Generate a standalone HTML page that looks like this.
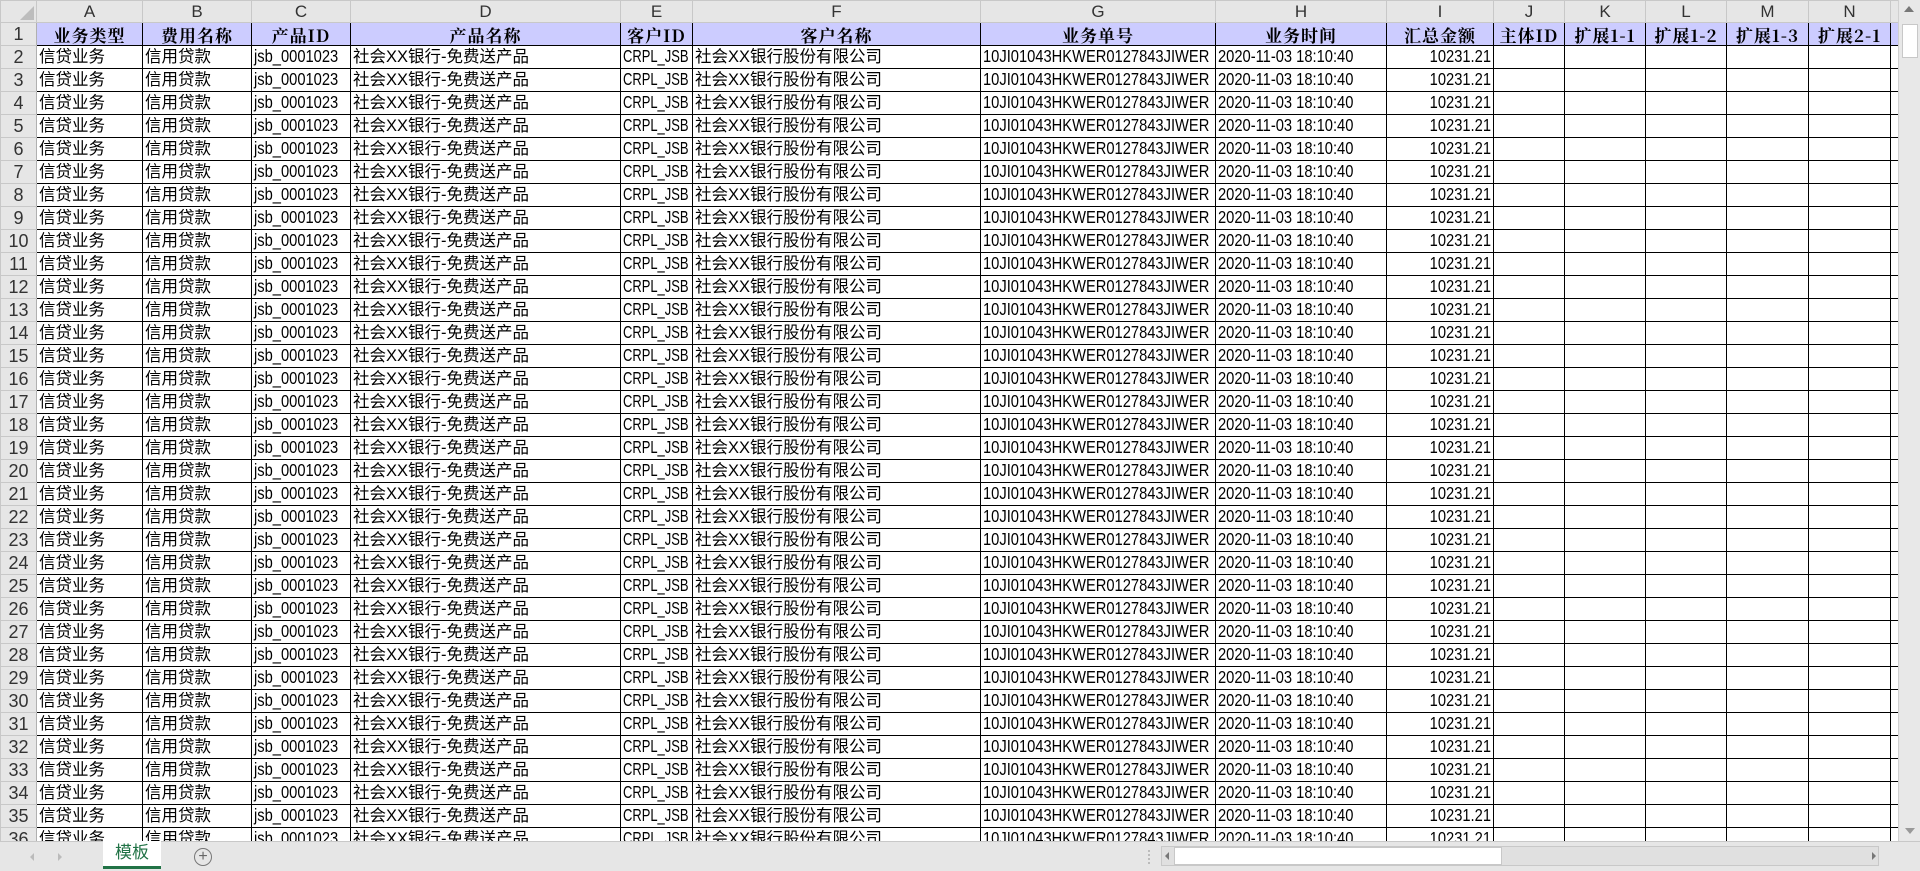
<!DOCTYPE html>
<html><head><meta charset="utf-8"><style>
*{margin:0;padding:0;box-sizing:border-box}
body{width:1920px;height:871px;overflow:hidden;background:#fff;position:relative;font-family:"Liberation Sans","Noto Sans CJK SC",sans-serif}
#wrap{position:absolute;left:0;top:0;width:1898px;height:841px;overflow:hidden}
table{border-collapse:collapse;table-layout:fixed;width:1898px}
td{height:23px;border:1px solid #000;white-space:nowrap;overflow:hidden;font-size:16.5px;padding:0 2px;color:#000;line-height:21px}
td span.n{display:inline-block;font-size:17.5px;transform:scaleX(.84);transform-origin:left center}
td span.e{transform:scaleX(.74)}
td.r span.n{transform-origin:right center}
td.v{overflow:visible}
tr.ch td{height:21px;background:#e6e6e6;border:1px solid #c8c8c8;text-align:center;font-size:17px;color:#333;font-family:"Liberation Sans",sans-serif}
td.rh{background:#e6e6e6;border:1px solid #c8c8c8;border-right:1px solid #b0b0b0;text-align:center;font-size:18px;color:#333;padding:0}
tr.h1 td{background:#ccccff;text-align:center;font-weight:bold;font-family:"Noto Serif CJK SC","Liberation Serif",serif;font-size:17px;letter-spacing:1px}
tr.h1 td.rh{background:#e6e6e6;font-family:"Liberation Sans",sans-serif;font-weight:normal;letter-spacing:0;font-size:18px}
td.r{text-align:right}
#vs{position:absolute;left:1898px;top:0;width:22px;height:841px;background:#e8e8e8;border-left:1px solid #d0d0d0}
#bot{position:absolute;left:0;top:841px;width:1920px;height:30px;background:#e6e6e6;border-top:1px solid #c8c8c8}
</style></head><body>
<div id="wrap"><table id="t">
<colgroup><col style="width:36px"><col style="width:106px"><col style="width:109px"><col style="width:99px"><col style="width:270px"><col style="width:72px"><col style="width:288px"><col style="width:235px"><col style="width:171px"><col style="width:107px"><col style="width:71px"><col style="width:81px"><col style="width:81px"><col style="width:82px"><col style="width:82px"><col style="width:8px"></colgroup>
<tr class="ch"><td style="position:relative"><svg width="14" height="14" style="position:absolute;right:2px;bottom:2px"><path d="M14 0V14H0Z" fill="#bdbdbd"/></svg></td><td>A</td><td>B</td><td>C</td><td>D</td><td>E</td><td>F</td><td>G</td><td>H</td><td>I</td><td>J</td><td>K</td><td>L</td><td>M</td><td>N</td><td></td></tr>
<tr class="h1"><td class="rh">1</td><td>业务类型</td><td>费用名称</td><td>产品ID</td><td>产品名称</td><td>客户ID</td><td>客户名称</td><td>业务单号</td><td>业务时间</td><td>汇总金额</td><td>主体ID</td><td>扩展1-1</td><td>扩展1-2</td><td>扩展1-3</td><td>扩展2-1</td><td></td></tr>
</table></div>
<script>
var t=document.getElementById('t'),h='';
for(var i=2;i<=37;i++){h+='<tr><td class="rh">'+i+'</td><td>信贷业务</td><td>信用贷款</td><td class="v"><span class="n">jsb_0001023</span></td><td>社会XX银行-免费送产品</td><td class="v"><span class="n e">CRPL_JSB</span></td><td>社会XX银行股份有限公司</td><td class="v"><span class="n">10JI01043HKWER0127843JIWER</span></td><td class="v"><span class="n">2020-11-03 18:10:40</span></td><td class="r"><span class="n">10231.21</span></td><td></td><td></td><td></td><td></td><td></td><td></td></tr>';}
t.tBodies[0].insertAdjacentHTML('beforeend',h);
</script>
<div id="vs">
<div style="position:absolute;left:5px;top:6px;width:0;height:0;border-left:5px solid transparent;border-right:5px solid transparent;border-bottom:6px solid #777"></div>
<div style="position:absolute;left:3px;top:24px;width:16px;height:34px;background:#fff;border:1px solid #c8c8c8"></div>
<div style="position:absolute;left:6px;top:828px;width:0;height:0;border-left:5px solid transparent;border-right:5px solid transparent;border-top:6px solid #999"></div>
</div>
<div id="bot">
<div style="position:absolute;left:30px;top:11px;width:0;height:0;border-top:4px solid transparent;border-bottom:4px solid transparent;border-right:4px solid #bbb"></div>
<div style="position:absolute;left:58px;top:11px;width:0;height:0;border-top:4px solid transparent;border-bottom:4px solid transparent;border-left:4px solid #bbb"></div>
<div style="position:absolute;left:103px;top:-1px;width:58px;height:28px;background:#fff;border-bottom:3px solid #217346;color:#217346;font-size:17px;text-align:center;line-height:24px;font-family:'Liberation Sans','Noto Sans CJK SC',sans-serif">模板</div>
<div style="position:absolute;left:194px;top:6px;width:18px;height:18px;border:1px solid #777;border-radius:50%;color:#666;font-size:16px;line-height:15px;text-align:center">+</div>
<div style="position:absolute;left:1148px;top:8px;width:2px;height:14px;border-left:2px dotted #bbb"></div>
<div style="position:absolute;left:1161px;top:4px;width:718px;height:20px;background:#e0e0e0;border:1px solid #c8c8c8"></div>
<div style="position:absolute;left:1174px;top:5px;width:328px;height:18px;background:#fff;border:1px solid #c8c8c8"></div>
<div style="position:absolute;left:1165px;top:10px;width:0;height:0;border-top:4px solid transparent;border-bottom:4px solid transparent;border-right:4px solid #777"></div>
<div style="position:absolute;left:1872px;top:10px;width:0;height:0;border-top:4px solid transparent;border-bottom:4px solid transparent;border-left:4px solid #777"></div>
</div>
</body></html>
